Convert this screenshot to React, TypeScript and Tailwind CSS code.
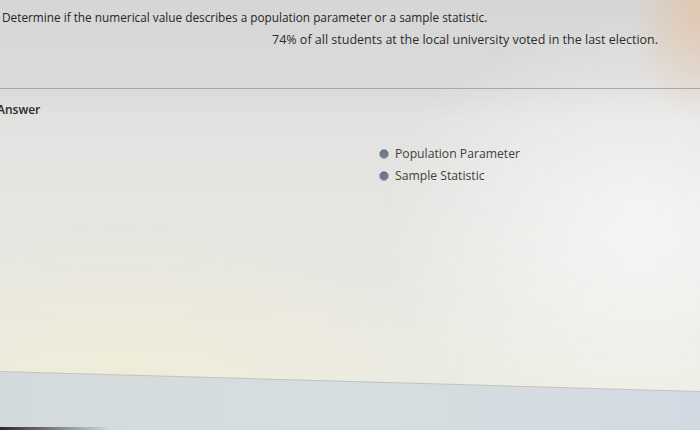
import React from "react";

function Radio({ label }: { label: string }) {
  return (
    <label className="flex items-center gap-[6px] h-[22px]">
      <span className="w-[10px] h-[10px] rounded-full bg-[#6f7a90] border border-[#a3abbb] shadow-[inset_0_1px_1px_rgba(0,0,0,0.25)]" />
      <span className="text-[12.2px] text-[#3f3f42]">{label}</span>
    </label>
  );
}

export default function App() {
  return (
    <div
      className="relative w-[700px] h-[430px] overflow-hidden flex flex-col font-['Open_Sans',sans-serif] bg-[radial-gradient(ellipse_70px_110px_at_100%_10px,rgba(236,185,140,0.5),transparent),radial-gradient(ellipse_260px_220px_at_640px_230px,rgba(250,250,250,0.75),transparent),radial-gradient(ellipse_300px_160px_at_120px_380px,rgba(240,236,212,0.7),transparent),linear-gradient(to_bottom,#d6d6d6_0px,#dadad9_88px,#e2e2e0_120px,#e6e6e2_250px,#ecebe2_372px)]"
    >
      <section className="h-[89px] shrink-0 pl-[2px] pt-[8px] border-b border-[#a9a9a9]">
        <p className="text-[11.8px] leading-[18px] text-[#262626]">
          Determine if the numerical value describes a population parameter or a sample statistic.
        </p>
        <p className="mt-[5px] ml-[270px] text-[12.5px] leading-[18px] text-[#2c2c2c]">
          74% of all students at the local university voted in the last election.
        </p>
      </section>

      <section className="flex-1 pt-[12px]">
        <h2 className="-ml-[3px] text-[12px] font-semibold leading-[18px] text-[#2a2a2a]">Answer</h2>
        <div className="ml-[379px] mt-[24px] flex flex-col">
          <Radio label="Population Parameter" />
          <Radio label="Sample Statistic" />
        </div>
      </section>

      <div className="h-[58px] shrink-0 drop-shadow-[0_-1px_0_rgba(120,120,130,0.35)]">
        <div className="h-full [clip-path:polygon(0_0,100%_20px,100%_100%,0_100%)] bg-[linear-gradient(to_right,#d2dadb,#d6dee0_50%,#d3d9e2)]" />
      </div>
      <div className="absolute left-0 bottom-0 w-[110px] h-[3px] bg-[linear-gradient(to_right,#2a2a2a,rgba(60,60,60,0))]" />
    </div>
  );
}
